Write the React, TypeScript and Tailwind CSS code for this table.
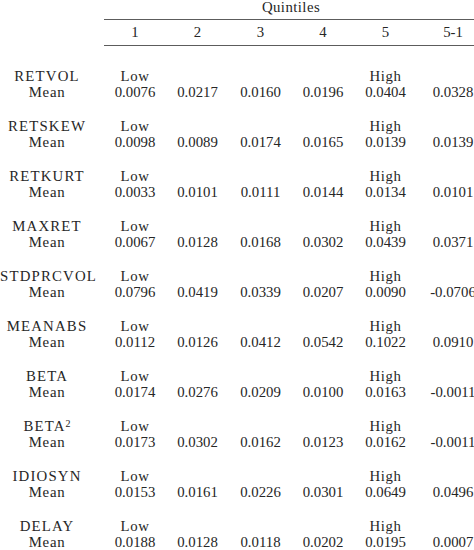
import React from "react";

const rows: { label: React.ReactNode; values: string[] }[] = [
  { label: "RETVOL", values: ["0.0076", "0.0217", "0.0160", "0.0196", "0.0404", "0.0328"] },
  { label: "RETSKEW", values: ["0.0098", "0.0089", "0.0174", "0.0165", "0.0139", "0.0139"] },
  { label: "RETKURT", values: ["0.0033", "0.0101", "0.0111", "0.0144", "0.0134", "0.0101"] },
  { label: "MAXRET", values: ["0.0067", "0.0128", "0.0168", "0.0302", "0.0439", "0.0371"] },
  { label: "STDPRCVOL", values: ["0.0796", "0.0419", "0.0339", "0.0207", "0.0090", "-0.0706"] },
  { label: "MEANABS", values: ["0.0112", "0.0126", "0.0412", "0.0542", "0.1022", "0.0910"] },
  { label: "BETA", values: ["0.0174", "0.0276", "0.0209", "0.0100", "0.0163", "-0.0011"] },
  {
    label: (
      <>
        BETA<sup className="text-[10px] tracking-normal -top-[0.45em]">2</sup>
      </>
    ),
    values: ["0.0173", "0.0302", "0.0162", "0.0123", "0.0162", "-0.0011"],
  },
  { label: "IDIOSYN", values: ["0.0153", "0.0161", "0.0226", "0.0301", "0.0649", "0.0496"] },
  { label: "DELAY", values: ["0.0188", "0.0128", "0.0118", "0.0202", "0.0195", "0.0007"] },
];

const cols = "grid grid-cols-[104px_62px_63px_63px_62px_63px_72px]";

const App: React.FC = () => {
  return (
    <div
      className="w-[474px] h-[550px] overflow-hidden bg-white text-[#262626] text-[14.8px]"
      style={{ fontFamily: '"Liberation Serif", "Times New Roman", serif' }}
    >
      {/* Quintiles heading */}
      <div className={cols}>
        <div />
        <div className="col-span-6 h-[19px] leading-[14px] text-center pr-[11px] tracking-[0.03em]">
          Quintiles
        </div>
      </div>
      <div className={cols}>
        <div />
        <div className="col-span-6 h-px bg-[#5c5c5c]" />
      </div>

      {/* Column numbers */}
      <div className={cols}>
        <div />
        {["1", "2", "3", "4", "5", "5-1"].map((h) => (
          <div key={h} className="h-[25px] leading-[25px] text-center">
            {h}
          </div>
        ))}
      </div>
      <div className={cols}>
        <div />
        <div className="col-span-6 h-px bg-[#5c5c5c]" />
      </div>

      {/* Body */}
      <div className="pt-[23px] flex flex-col gap-[19px]">
        {rows.map((r, i) => (
          <div key={i} className={`${cols} leading-[15.5px]`}>
            <div className="pr-[10px] text-center whitespace-nowrap">
              <div className="tracking-[0.08em]">{r.label}</div>
              <div className="tracking-[0.05em]">Mean</div>
            </div>
            {r.values.map((v, j) => (
              <div key={j} className="text-center whitespace-nowrap">
                <div className="tracking-[0.04em]">{j === 0 ? "Low" : j === 4 ? "High" : "\u00a0"}</div>
                <div>{v}</div>
              </div>
            ))}
          </div>
        ))}
      </div>
    </div>
  );
};

export default App;
